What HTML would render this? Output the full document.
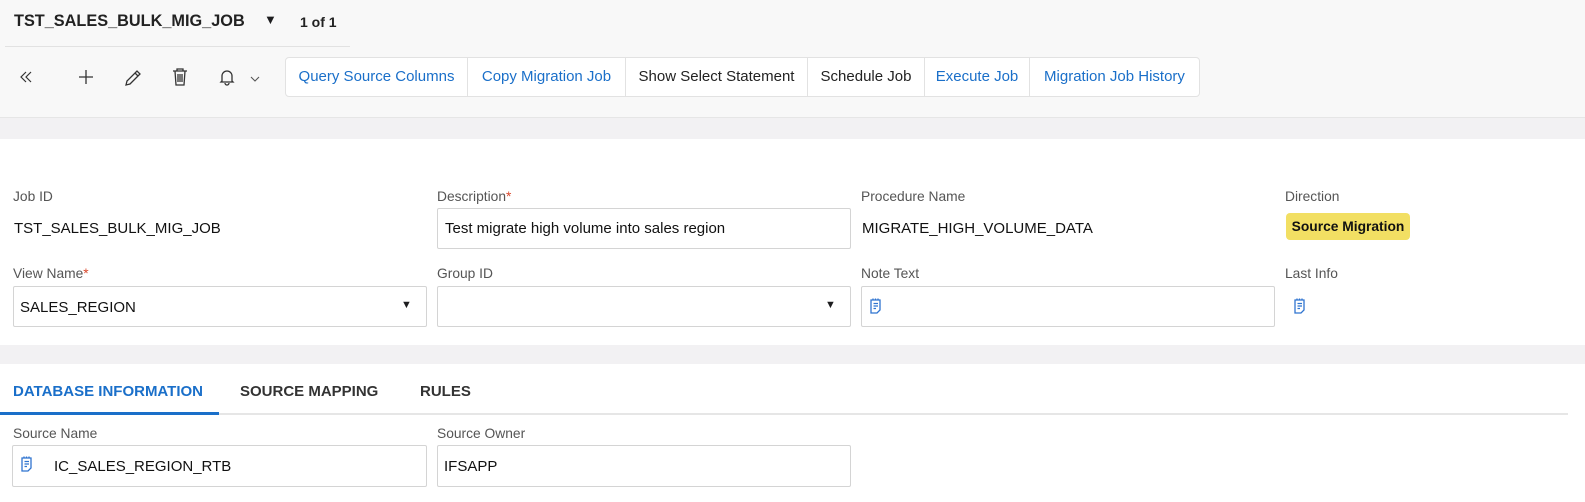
<!DOCTYPE html>
<html><head><style>
*{box-sizing:border-box;margin:0;padding:0}
body{width:1585px;height:502px;overflow:hidden;font-family:"Liberation Sans",sans-serif;background:#fff;position:relative;color:#1d1d1f}
.a{position:absolute}
.lbl{position:absolute;font-size:13.8px;color:#555;top:0}
.val{position:absolute;font-size:15px;color:#111}
.inp{position:absolute;border:1px solid #d4d4d4;background:#fff;border-radius:2px}
.btn{position:absolute;top:57px;height:40px;line-height:40px;font-size:15px;text-align:center;border-left:1px solid #e2e2e2;color:#1a6fc9}
.ico{position:absolute}
</style></head><body>
<div class="a" style="left:0;top:0;width:1585px;height:117px;background:#f8f8f8"></div>
<div class="a" style="left:0;top:117px;width:1585px;height:22px;background:#f2f1f3;border-top:1px solid #e6e6e6"></div>
<div class="a" style="left:0;top:345px;width:1585px;height:19px;background:#f2f1f3"></div>
<div class="a" style="left:14px;top:12px;font-size:16.3px;color:#222;font-weight:bold">TST_SALES_BULK_MIG_JOB</div>
<div class="a" style="left:264px;top:12px;font-size:13px">▼</div>
<div class="a" style="left:300px;top:14px;font-size:14px;font-weight:bold;color:#222">1 of 1</div>
<div class="a" style="left:5px;top:46px;width:345px;height:1px;background:#e2e2e2"></div>
<svg class="ico" style="left:19px;top:70px" width="14" height="14"><path d="M7 2L2 7l5 5M12 2L7 7l5 5" fill="none" stroke="#333" stroke-width="1.2"/></svg>
<svg class="ico" style="left:77px;top:68px" width="18" height="18"><path d="M9 2v14M2 9h14" stroke="#333" stroke-width="1.3"/></svg>
<svg class="ico" style="left:123px;top:68px" width="20" height="20"><path d="M3 17l1-4L14 3l3 3L7 16z M12 5l3 3" fill="none" stroke="#333" stroke-width="1.3"/></svg>
<svg class="ico" style="left:171px;top:67px" width="18" height="20"><path d="M2 4h14M6 4V2h6v2M4 4l1 14h8l1-14M7 7v8M9 7v8M11 7v8" fill="none" stroke="#333" stroke-width="1.3"/></svg>
<svg class="ico" style="left:219px;top:68px" width="16" height="18"><path d="M3 13V8a5 5 0 0 1 10 0v5l1 1H2z M6 15a2 2 0 0 0 4 0" fill="none" stroke="#333" stroke-width="1.3"/></svg>
<svg class="ico" style="left:249px;top:75px" width="12" height="8"><path d="M2 2l4 4 4-4" fill="none" stroke="#555" stroke-width="1.1"/></svg>
<div class="a" style="left:285px;top:57px;width:915px;height:40px;border:1px solid #e2e2e2;border-radius:4px;background:#fff"></div>
<div class="btn" style="left:286px;width:181px;border-left:none">Query Source Columns</div>
<div class="btn" style="left:467px;width:158px">Copy Migration Job</div>
<div class="btn" style="left:625px;width:182px;color:#222">Show Select Statement</div>
<div class="btn" style="left:807px;width:117px;color:#222">Schedule Job</div>
<div class="btn" style="left:924px;width:105px">Execute Job</div>
<div class="btn" style="left:1029px;width:170px">Migration Job History</div>

<div class="lbl" style="left:13px;top:189px">Job ID</div>
<div class="val" style="left:14px;top:220px">TST_SALES_BULK_MIG_JOB</div>
<div class="lbl" style="left:437px;top:189px">Description<span style="color:#d9472b">*</span></div>
<div class="inp" style="left:437px;top:208px;width:414px;height:41px"></div>
<div class="val" style="left:445px;top:220px">Test migrate high volume into sales region</div>
<div class="lbl" style="left:861px;top:189px">Procedure Name</div>
<div class="val" style="left:862px;top:220px">MIGRATE_HIGH_VOLUME_DATA</div>
<div class="lbl" style="left:1285px;top:189px">Direction</div>
<div class="a" style="left:1286px;top:213px;width:124px;height:27px;background:#f2df63;border-radius:4px;font-size:13.8px;font-weight:bold;line-height:27px;text-align:center;color:#111">Source Migration</div>

<div class="lbl" style="left:13px;top:266px">View Name<span style="color:#d9472b">*</span></div>
<div class="inp" style="left:13px;top:286px;width:414px;height:41px"></div>
<div class="val" style="left:20px;top:299px">SALES_REGION</div>
<div class="a" style="left:401px;top:299px;font-size:11px">▼</div>
<div class="lbl" style="left:437px;top:266px">Group ID</div>
<div class="inp" style="left:437px;top:286px;width:414px;height:41px"></div>
<div class="a" style="left:825px;top:299px;font-size:11px">▼</div>
<div class="lbl" style="left:861px;top:266px">Note Text</div>
<div class="inp" style="left:861px;top:286px;width:414px;height:41px"></div>
<svg class="ico" style="left:869px;top:297px" width="14" height="18"><path d="M2 3h9v10l-3 3H2z M4.5 6.5h4.5M4.5 9h4.5M4.5 11.5h2.5M4 1.5v2M6.5 1.5v2M9 1.5v2" fill="none" stroke="#2f74d0" stroke-width="1.3"/></svg>
<div class="lbl" style="left:1285px;top:266px">Last Info</div>
<svg class="ico" style="left:1293px;top:297px" width="14" height="18"><path d="M2 3h9v10l-3 3H2z M4.5 6.5h4.5M4.5 9h4.5M4.5 11.5h2.5M4 1.5v2M6.5 1.5v2M9 1.5v2" fill="none" stroke="#2f74d0" stroke-width="1.3"/></svg>

<div class="a" style="left:13px;top:383px;font-size:15px;font-weight:bold;color:#1a6fc9">DATABASE INFORMATION</div>
<div class="a" style="left:240px;top:383px;font-size:15px;font-weight:bold;color:#333">SOURCE MAPPING</div>
<div class="a" style="left:420px;top:383px;font-size:15px;font-weight:bold;color:#333">RULES</div>
<div class="a" style="left:0;top:413px;width:1568px;height:2px;background:#e6e6e6"></div>
<div class="a" style="left:0;top:412px;width:219px;height:3px;background:#1a6fc9"></div>

<div class="lbl" style="left:13px;top:426px">Source Name</div>
<div class="inp" style="left:12px;top:445px;width:415px;height:42px"></div>
<svg class="ico" style="left:20px;top:455px" width="14" height="18"><path d="M2 3h9v10l-3 3H2z M4.5 6.5h4.5M4.5 9h4.5M4.5 11.5h2.5M4 1.5v2M6.5 1.5v2M9 1.5v2" fill="none" stroke="#2f74d0" stroke-width="1.3"/></svg>
<div class="val" style="left:54px;top:458px">IC_SALES_REGION_RTB</div>
<div class="lbl" style="left:437px;top:426px">Source Owner</div>
<div class="inp" style="left:437px;top:445px;width:414px;height:42px"></div>
<div class="val" style="left:444px;top:458px">IFSAPP</div>
</body></html>
